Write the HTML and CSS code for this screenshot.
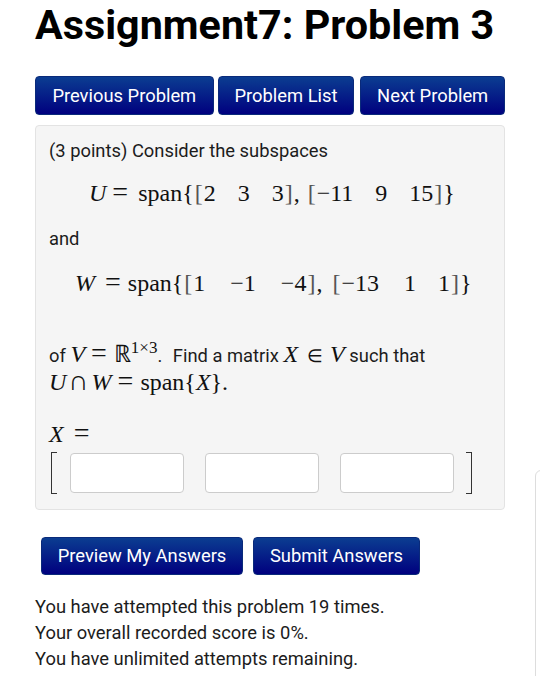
FILE: index.html
```html
<!DOCTYPE html>
<html lang="en-US">
  <head>
    <title>Assignment7: Problem 3</title>
    <meta charset="utf-8" />
    <link rel="stylesheet" href="styles.css">
  </head>
  <body>
    <main>
      <h1>Assignment7: Problem 3</h1>
      <nav class="buttons">
        <a class="btn btn-prev">Previous Problem</a>
        <a class="btn btn-list">Problem List</a>
        <a class="btn btn-next">Next Problem</a>
      </nav>
      <section class="well">
        <p class="intro">(3 points) Consider the subspaces</p>
        <div class="display display-u">
          <i>U</i><span class="eq">=</span>span{<span class="br">[</span>2<span class="cell">3</span><span class="cell">3</span><span class="br">]</span><span class="comma">,</span><span class="br">[</span>−11<span class="cell">9</span><span class="cell">15</span><span class="br">]</span>}
        </div>
        <p class="and">and</p>
        <div class="display display-w">
          <i>W</i><span class="eq eq-w">=</span>span{<span class="br">[</span>1<span class="cell-w">−1</span><span class="cell-w">−4</span><span class="br">]</span><span class="comma comma-w">,</span><span class="br">[</span>−13<span class="cell-wide">1</span><span class="cell">1</span><span class="br">]</span>}
        </div>
        <p class="find">
          of <span class="math"><i>V</i><span class="eq eq-r">=</span>ℝ<sup>1×3</sup></span><span class="dot">.</span> Find a matrix <span class="math"><i>X</i><span class="rel">∈</span><i>V</i></span> such that<br />
          <span class="math"><i>U</i><span class="rel rel-cap">∩</span><i>W</i><span class="eq eq-r">=</span>span{<i>X</i>}.</span>
        </p>
        <div class="answer-label math"><i>X</i><span class="eq eq-w">=</span></div>
        <div class="matrix">
          <span class="bracket bracket-left"></span>
          <input type="text" />
          <input type="text" />
          <input type="text" />
          <span class="bracket bracket-right"></span>
        </div>
      </section>
      <div class="buttons submit-row">
        <a class="btn btn-preview">Preview My Answers</a>
        <a class="btn btn-submit">Submit Answers</a>
      </div>
      <p class="status">
        You have attempted this problem 19 times.<br />
        Your overall recorded score is 0%.<br />
        You have unlimited attempts remaining.
      </p>
    </main>
    <div class="side-tab"></div>
  </body>
</html>
```

FILE: styles.css
```css
html {
  box-sizing: border-box;
}
body {
  margin: 0;
  height: 676px;
  overflow: hidden;
  font-family: Roboto, "Liberation Sans", sans-serif;
  font-size: 18.35px;
  line-height: 26px;
  color: #1c1c1c;
  background: #fff;
}
main {
  padding: 0 35px;
}
h1 {
  margin: 0;
  padding-top: 2px;
  font-size: 41.3px;
  line-height: 46px;
  font-weight: 700;
  color: #000;
}
.buttons {
  display: flex;
  gap: 4px;
  margin-top: 28px;
}
.btn {
  box-sizing: border-box;
  display: block;
  height: 39px;
  line-height: 37px;
  text-align: center;
  color: #fff;
  border-radius: 4px;
  border: 1px solid #0a2a7a;
  background: linear-gradient(#0b3d91, #00007f);
}
.btn-prev {
  width: 179px;
}
.btn-list {
  width: 137px;
}
.btn-next {
  width: 145px;
  margin-left: 2px;
}
.well {
  box-sizing: border-box;
  height: 385px;
  margin-top: 10px;
  padding: 12px 13px;
  background: #f5f5f5;
  border: 1px solid #e3e3e3;
  border-radius: 4px;
}
.well p {
  margin: 0;
}
.display {
  font-family: "Liberation Serif", serif;
  font-size: 24px;
  line-height: 28px;
  white-space: nowrap;
  color: #111;
}
.display-u {
  margin-top: 15px;
  padding-left: 40px;
}
.display-w {
  margin-top: 17px;
  padding-left: 26px;
}
.and {
  margin-top: 19px !important;
}
.eq {
  margin: 0 10px 0 6px;
  font-size: 28px;
  line-height: 0;
}
.eq-w {
  margin: 0 7px 0 10px;
}
.eq-r {
  margin: 0 7px 0 6px;
}
.br {
  color: #555;
  margin: 0 1px;
}
.comma {
  margin-right: 7px;
}
.comma-w {
  margin-right: 9px;
}
.cell {
  margin-left: 22px;
}
.cell-w {
  margin-left: 25px;
}
.cell-wide {
  margin-left: 25px;
}
.math {
  font-family: "Liberation Serif", serif;
  font-size: 24px;
  line-height: 26px;
  color: #111;
}
.math sup {
  font-size: 17px;
  line-height: 0;
}
.dot {
  margin-right: 6px;
}
.rel {
  margin: 0 7px 0 9px;
  font-size: 18px;
  line-height: 0;
}
.rel-cap {
  margin: 0 3px 0 2px;
  font-size: 28px;
}
.find {
  margin-top: 44px !important;
  line-height: 26px;
}
.answer-label {
  margin-top: 24px;
}
.matrix {
  display: flex;
  align-items: center;
  margin-top: 5px;
  gap: 21px;
  padding-left: 2px;
}
.matrix input {
  box-sizing: border-box;
  width: 114px;
  height: 40px;
  background: #fff;
  border: 1px solid #ccc;
  border-radius: 4px;
}
.bracket {
  width: 5px;
  height: 40px;
  border: 1px solid #333;
}
.bracket-left {
  border-right: none;
  margin-right: -8px;
}
.bracket-right {
  border-left: none;
  margin-left: -9px;
}
.submit-row {
  gap: 10px;
  margin-top: 27px;
  padding-left: 6px;
}
.submit-row .btn {
  height: 38px;
  line-height: 36px;
}
.btn-preview {
  width: 202px;
}
.btn-submit {
  width: 167px;
}
.status {
  margin: 19px 0 0;
}
.side-tab {
  position: absolute;
  left: 535px;
  top: 470px;
  width: 10px;
  height: 220px;
  box-sizing: border-box;
  border: 1px solid #ddd;
  border-radius: 6px 0 0 0;
}
```
